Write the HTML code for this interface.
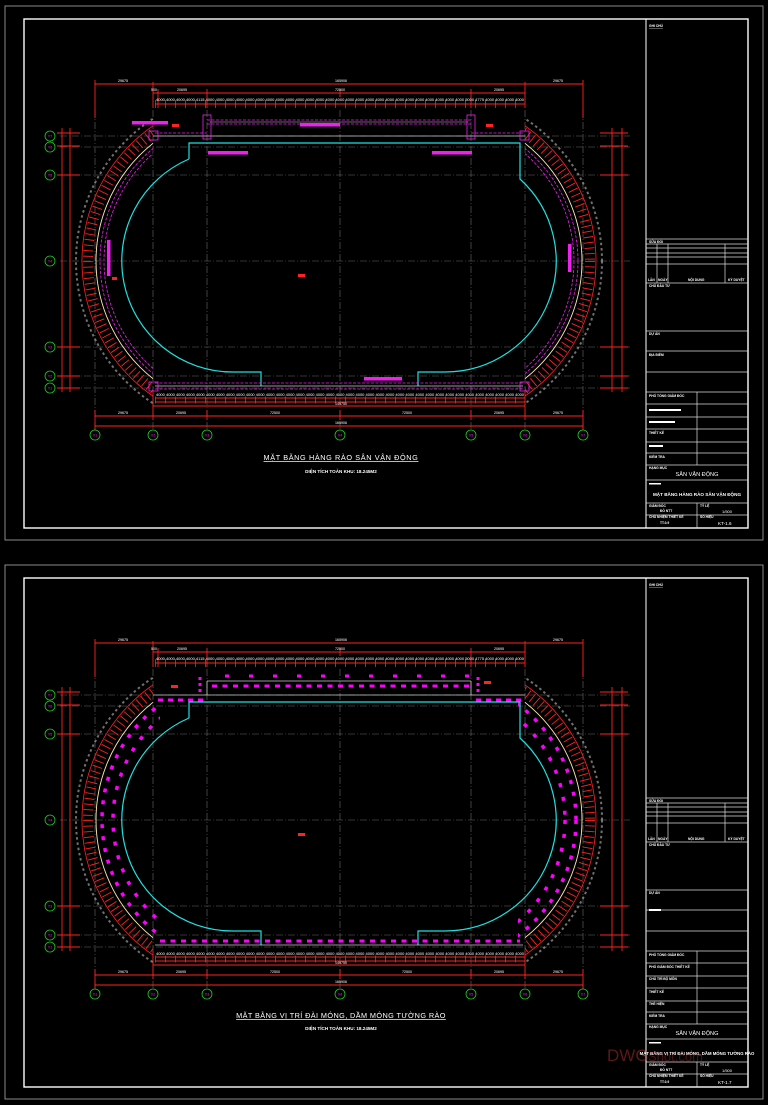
<!DOCTYPE html>
<html><head><meta charset="utf-8"><style>
html,body{margin:0;padding:0;background:#000;}
svg{display:block;}
text{font-family:"Liberation Sans",sans-serif;}
</style></head><body>
<svg width="768" height="1105" viewBox="0 0 768 1105" xmlns="http://www.w3.org/2000/svg">
<rect width="768" height="1105" fill="#000"/>
<defs>
<clipPath id="cl"><rect x="0" y="100" width="153" height="320"/></clipPath>
<clipPath id="cr"><rect x="525" y="100" width="200" height="320"/></clipPath>
<clipPath id="cl2"><rect x="0" y="100" width="160" height="320"/></clipPath>
<clipPath id="cr2"><rect x="518" y="100" width="200" height="320"/></clipPath>
<g id="geo">
 <rect x="5" y="6" width="758" height="534" fill="none" stroke="#8a8a8a" stroke-width="1"/>
 <rect x="24" y="19" width="724" height="509" fill="none" stroke="#fff" stroke-width="1.4"/>
 <line x1="646" y1="19" x2="646" y2="528" stroke="#fff" stroke-width="1"/>
 <g stroke="#ddd" stroke-width="0.7" fill="none">
  <line x1="646" y1="239" x2="748" y2="239"/><line x1="646" y1="244" x2="748" y2="244"/>
  <line x1="646" y1="248" x2="748" y2="248"/><line x1="646" y1="253" x2="748" y2="253"/>
  <line x1="646" y1="257" x2="748" y2="257"/><line x1="646" y1="264" x2="748" y2="264"/>
  <line x1="646" y1="283" x2="748" y2="283"/>
  <line x1="657" y1="244" x2="657" y2="283"/><line x1="668" y1="244" x2="668" y2="283"/><line x1="725" y1="244" x2="725" y2="283"/>
  <line x1="646" y1="331" x2="748" y2="331"/><line x1="646" y1="351" x2="748" y2="351"/>
  <line x1="646" y1="372" x2="748" y2="372"/><line x1="646" y1="392" x2="748" y2="392"/>
  <line x1="646" y1="404" x2="748" y2="404"/><line x1="646" y1="417" x2="748" y2="417"/>
  <line x1="646" y1="429" x2="748" y2="429"/><line x1="646" y1="442" x2="748" y2="442"/>
  <line x1="646" y1="453" x2="748" y2="453"/><line x1="646" y1="465" x2="748" y2="465"/>
  <line x1="646" y1="480" x2="748" y2="480"/><line x1="646" y1="503" x2="748" y2="503"/>
  <line x1="646" y1="515" x2="748" y2="515"/>
  <line x1="697" y1="392" x2="697" y2="465"/><line x1="697" y1="503" x2="697" y2="528"/>
 </g>
 <g stroke="#6a6a6a" stroke-width="0.6" stroke-dasharray="7 2 1 2">
  <line x1="95" y1="110" x2="95" y2="430"/><line x1="153" y1="110" x2="153" y2="430"/>
  <line x1="207" y1="110" x2="207" y2="430"/><line x1="340" y1="110" x2="340" y2="430"/>
  <line x1="471" y1="110" x2="471" y2="430"/><line x1="525" y1="110" x2="525" y2="430"/>
  <line x1="583" y1="110" x2="583" y2="430"/>
  <line x1="60" y1="136" x2="630" y2="136"/><line x1="60" y1="147" x2="630" y2="147"/>
  <line x1="60" y1="175" x2="630" y2="175"/><line x1="60" y1="261" x2="630" y2="261"/>
  <line x1="60" y1="347" x2="630" y2="347"/><line x1="60" y1="376" x2="630" y2="376"/>
  <line x1="60" y1="388" x2="630" y2="388"/>
 </g>
 <g stroke="#f22" stroke-width="0.9" fill="none">
  <line x1="95" y1="84" x2="583" y2="84"/><line x1="153" y1="93" x2="525" y2="93"/>
  <line x1="95" y1="80" x2="95" y2="118"/><line x1="583" y1="80" x2="583" y2="118"/>
  <line x1="153" y1="82" x2="153" y2="108"/><line x1="525" y1="82" x2="525" y2="108"/>
  <line x1="158" y1="89" x2="158" y2="108"/><line x1="207" y1="89" x2="207" y2="108"/>
  <line x1="471" y1="89" x2="471" y2="108"/><line x1="340" y1="89" x2="340" y2="97"/>
  <line x1="155" y1="104" x2="525" y2="104"/>
  <line x1="155" y1="104" x2="525" y2="104" stroke-width="8" stroke-dasharray="0.8 9.2"/>
  <line x1="155" y1="398" x2="525" y2="398"/>
  <line x1="155" y1="402" x2="525" y2="402"/>
  <line x1="153" y1="406" x2="525" y2="406"/>
  <line x1="95" y1="416" x2="583" y2="416"/><line x1="95" y1="426" x2="583" y2="426"/>
  <line x1="95" y1="410" x2="95" y2="430"/><line x1="153" y1="392" x2="153" y2="420"/>
  <line x1="207" y1="410" x2="207" y2="420"/><line x1="340" y1="410" x2="340" y2="420"/>
  <line x1="471" y1="410" x2="471" y2="420"/><line x1="525" y1="392" x2="525" y2="420"/>
  <line x1="583" y1="410" x2="583" y2="430"/>
  <line x1="62" y1="128" x2="62" y2="392"/><line x1="70" y1="128" x2="70" y2="392"/>
  <line x1="57" y1="133" x2="80" y2="133"/><line x1="57" y1="146" x2="80" y2="146"/>
  <line x1="57" y1="175" x2="80" y2="175"/><line x1="57" y1="347" x2="80" y2="347"/>
  <line x1="57" y1="376" x2="80" y2="376"/><line x1="57" y1="388" x2="80" y2="388"/>
  <line x1="612" y1="128" x2="612" y2="392"/><line x1="622" y1="128" x2="622" y2="392"/>
  <line x1="600" y1="133" x2="628" y2="133"/><line x1="600" y1="146" x2="628" y2="146"/>
  <line x1="600" y1="175" x2="628" y2="175"/><line x1="600" y1="347" x2="628" y2="347"/>
  <line x1="600" y1="376" x2="628" y2="376"/><line x1="600" y1="388" x2="628" y2="388"/>
 </g>
 <line x1="155" y1="400" x2="525" y2="400" stroke="#f22" stroke-width="7" stroke-dasharray="0.8 9.2"/>
 <g fill="none" stroke="#2c2" stroke-width="0.8">
  <circle cx="95" cy="435" r="5"/><circle cx="153" cy="435" r="5"/><circle cx="207" cy="435" r="5"/>
  <circle cx="340" cy="435" r="5"/><circle cx="471" cy="435" r="5"/><circle cx="525" cy="435" r="5"/>
  <circle cx="583" cy="435" r="5"/>
  <circle cx="50" cy="136" r="5"/><circle cx="50" cy="147" r="5"/><circle cx="50" cy="175" r="5"/>
  <circle cx="50" cy="261" r="5"/><circle cx="50" cy="347" r="5"/><circle cx="50" cy="376" r="5"/>
  <circle cx="50" cy="388" r="5"/>
 </g>
 <path d="M189,159 V143 H520 V179 A111,111 0 0 1 445,372 H418 V386 M261,386 V372 H233 A111,111 0 0 1 189,159" fill="none" stroke="#1ee0e0" stroke-width="1.2"/>
 <g clip-path="url(#cl)" fill="none">
  <circle cx="246" cy="261" r="158" stroke="#f22" stroke-width="10" stroke-dasharray="0.9 4.6"/>
  <circle cx="246" cy="261" r="164" stroke="#f22" stroke-width="0.8"/>
  <circle cx="246" cy="261" r="170" stroke="#bbb" stroke-width="2" stroke-dasharray="2.5 2.8" opacity="0.6"/>
  <circle cx="246" cy="261" r="150" stroke="#ffe9b0" stroke-width="0.9"/>
 </g>
 <g clip-path="url(#cr)" fill="none">
  <circle cx="432" cy="261" r="158" stroke="#f22" stroke-width="10" stroke-dasharray="0.9 4.6"/>
  <circle cx="432" cy="261" r="164" stroke="#f22" stroke-width="0.8"/>
  <circle cx="432" cy="261" r="170" stroke="#bbb" stroke-width="2" stroke-dasharray="2.5 2.8" opacity="0.6"/>
  <circle cx="432" cy="261" r="150" stroke="#ffe9b0" stroke-width="0.9"/>
 </g>
</g>
</defs>

<!-- ===== SHEET 1 ===== -->
<use href="#geo"/>
<g clip-path="url(#cl)" fill="none">
  <circle cx="246" cy="261" r="146" stroke="#e2e" stroke-width="0.8" stroke-dasharray="3 1.5"/>
  <circle cx="246" cy="261" r="142" stroke="#e2e" stroke-width="0.8" stroke-dasharray="3 1.5"/>
</g>
<g clip-path="url(#cr)" fill="none">
  <circle cx="432" cy="261" r="146" stroke="#e2e" stroke-width="0.8" stroke-dasharray="3 1.5"/>
  <circle cx="432" cy="261" r="142" stroke="#e2e" stroke-width="0.8" stroke-dasharray="3 1.5"/>
</g>
<g fill="none" stroke-width="0.8">
 <line x1="153" y1="136" x2="525" y2="136" stroke="#ccc"/>
 <line x1="155" y1="133" x2="207" y2="133" stroke="#e2e" stroke-dasharray="3 1.5"/>
 <line x1="471" y1="133" x2="523" y2="133" stroke="#e2e" stroke-dasharray="3 1.5"/>
 <line x1="207" y1="120" x2="471" y2="120" stroke="#e2e" stroke-dasharray="3 1.5"/>
 <line x1="207" y1="124" x2="471" y2="124" stroke="#e2e" stroke-dasharray="3 1.5"/>
 <line x1="210" y1="122" x2="468" y2="122" stroke="#ccc" stroke-width="0.5"/>
 <rect x="203" y="115" width="8" height="24" stroke="#e2e"/>
 <rect x="467" y="115" width="8" height="24" stroke="#e2e"/>
 <rect x="149" y="131" width="9" height="9" stroke="#e2e"/>
 <rect x="520" y="131" width="9" height="9" stroke="#e2e"/>
 <line x1="155" y1="383" x2="523" y2="383" stroke="#e2e" stroke-dasharray="3 1.5"/>
 <line x1="155" y1="389" x2="523" y2="389" stroke="#e2e" stroke-dasharray="3 1.5"/>
 <line x1="155" y1="386" x2="523" y2="386" stroke="#ccc"/>
 <rect x="149" y="382" width="9" height="9" stroke="#e2e"/>
 <rect x="520" y="382" width="9" height="9" stroke="#e2e"/>
</g>
<g fill="#e2e">
 <rect x="132" y="121" width="36" height="3.5"/><rect x="208" y="151" width="40" height="3.5"/>
 <rect x="432" y="151" width="40" height="3.5"/><rect x="300" y="123" width="40" height="3.5"/>
 <rect x="364" y="377" width="38" height="3.5"/><rect x="107" y="240" width="3.5" height="36"/>
 <rect x="568" y="244" width="3.5" height="28"/>
</g>
<g fill="#f22"><rect x="298" y="274" width="7" height="3"/><rect x="172" y="124" width="7" height="3"/><rect x="486" y="124" width="7" height="3"/><rect x="112" y="277" width="5" height="3"/></g>
<g fill="#fff" font-size="3.6">
 <text x="156" y="101" textLength="368" lengthAdjust="spacingAndGlyphs">4000 4000 4000 4000 4115 4000 4000 4000 4000 4000 4000 4000 4000 4000 4000 4000 4000 4000 4000 4000 4000 4000 4000 4000 4000 4000 4000 4000 4000 4000 4000 5000 4775 4000 4000 4000 4000</text>
 <text x="156" y="396" textLength="368" lengthAdjust="spacingAndGlyphs">4000 4000 4000 4000 4000 4000 4000 4000 4000 4000 4000 4000 4000 4000 4000 4000 4000 4000 4000 4000 4000 4000 4000 4000 4000 4000 4000 4000 4000 4000 4000 4000 4000 4000 4000 4000 4000</text>
 <text x="118" y="82">29675</text><text x="335" y="82">165906</text><text x="553" y="82">29675</text>
 <text x="151" y="91">500</text><text x="177" y="91">20695</text><text x="335" y="91">72500</text><text x="494" y="91">20695</text>
 <text x="335" y="405">149750</text><text x="118" y="414">29675</text><text x="176" y="414">20695</text>
 <text x="270" y="414">72500</text><text x="402" y="414">72500</text><text x="494" y="414">20695</text><text x="553" y="414">29675</text>
 <text x="335" y="424">165906</text>
</g>
<g fill="#e2e" font-size="3.5" text-anchor="middle">
 <text x="95" y="436.5">X1</text><text x="153" y="436.5">X2</text><text x="207" y="436.5">X3</text><text x="340" y="436.5">X4</text><text x="471" y="436.5">X5</text><text x="525" y="436.5">X6</text><text x="583" y="436.5">X7</text>
 <text x="50" y="137.5">Y7</text><text x="50" y="148.5">Y6</text><text x="50" y="176.5">Y5</text><text x="50" y="262.5">Y4</text><text x="50" y="348.5">Y3</text><text x="50" y="377.5">Y2</text><text x="50" y="389.5">Y1</text>
</g>
<text x="341" y="460" fill="#fff" font-size="7.3" text-anchor="middle" letter-spacing="0.6" text-decoration="underline">MẶT BẰNG HÀNG RÀO SÂN VẬN ĐỘNG</text>
<text x="341" y="473" fill="#fff" font-size="4.6" text-anchor="middle" font-weight="bold">DIỆN TÍCH TOÀN KHU: 18.245M2</text>
<g fill="#fff" font-size="3.3" font-weight="bold">
 <text x="649" y="27" text-decoration="underline">GHI CHÚ</text>
 <text x="649" y="243">SỬA ĐỔI</text>
 <text x="648" y="281">LẦN</text><text x="658" y="281">NGÀY</text><text x="688" y="281">NỘI DUNG</text><text x="728" y="281">KÝ DUYỆT</text>
 <text x="649" y="287">CHỦ ĐẦU TƯ</text>
 <text x="649" y="335">DỰ ÁN</text><text x="649" y="356">ĐỊA ĐIỂM</text>
 <text x="649" y="397">PHÓ TỔNG GIÁM ĐỐC</text>
 <text x="649" y="434">THIẾT KẾ</text><text x="649" y="458">KIỂM TRA</text>
 <text x="649" y="469">HẠNG MỤC</text>
 <text x="649" y="507">GIÁM ĐỐC</text><text x="700" y="507">TỶ LỆ</text>
 <text x="649" y="518">CHỦ NHIỆM THIẾT KẾ</text><text x="700" y="518">SỐ HIỆU</text>
 <text x="660" y="512">ĐỖ NTT</text><text x="660" y="524">TT.0.9</text>
</g>
<g fill="#fff"><rect x="649" y="409" width="32" height="2"/><rect x="649" y="421" width="26" height="2"/><rect x="649" y="445" width="14" height="2"/><rect x="649" y="483" width="12" height="1.5"/></g>
<text x="697" y="476" fill="#fff" font-size="5.6" text-anchor="middle">SÂN VẬN ĐỘNG</text>
<text x="697" y="496" fill="#fff" font-size="4.6" font-weight="bold" text-anchor="middle">MẶT BẰNG HÀNG RÀO SÂN VẬN ĐỘNG</text>
<text x="722" y="513" fill="#fff" font-size="4">1/500</text>
<text x="718" y="525" fill="#fff" font-size="4.6">KT-1.6</text>

<!-- ===== SHEET 2 ===== -->
<g transform="translate(0,559)">
<use href="#geo"/>
<g clip-path="url(#cl2)" fill="none">
  <circle cx="246" cy="261" r="144" stroke="#f0f" stroke-width="3.5" stroke-dasharray="4 8"/>
  <circle cx="246" cy="261" r="133" stroke="#f0f" stroke-width="3.5" stroke-dasharray="4 10"/>
</g>
<g clip-path="url(#cr2)" fill="none">
  <circle cx="432" cy="261" r="144" stroke="#f0f" stroke-width="3.5" stroke-dasharray="4 8"/>
  <circle cx="432" cy="261" r="133" stroke="#f0f" stroke-width="3.5" stroke-dasharray="4 10"/>
</g>
<g fill="none" stroke-width="0.8">
 <line x1="153" y1="136" x2="525" y2="136" stroke="#ccc"/>
 <line x1="207" y1="122" x2="471" y2="122" stroke="#ccc"/>
 <line x1="207" y1="122" x2="207" y2="136" stroke="#ccc"/>
 <line x1="471" y1="122" x2="471" y2="136" stroke="#ccc"/>
 <line x1="155" y1="386" x2="523" y2="386" stroke="#ccc"/>
</g>
<g stroke="#f0f" stroke-width="3" fill="none">
 <line x1="212" y1="127" x2="470" y2="127" stroke-dasharray="5 5.5"/>
 <line x1="158" y1="141" x2="205" y2="141" stroke-dasharray="5 5"/>
 <line x1="476" y1="141" x2="522" y2="141" stroke-dasharray="5 5"/>
 <line x1="160" y1="382" x2="520" y2="382" stroke-dasharray="5 5.5"/>
 <line x1="225" y1="117" x2="470" y2="117" stroke-dasharray="4 20"/>
 <line x1="200" y1="118" x2="200" y2="136" stroke-dasharray="3 3"/>
 <line x1="478" y1="118" x2="478" y2="136" stroke-dasharray="3 3"/>
</g>
<g fill="#f22"><rect x="298" y="274" width="7" height="3"/><rect x="171" y="126" width="7" height="3"/><rect x="484" y="122" width="7" height="3"/></g>
<g fill="#fff" font-size="3.6">
 <text x="156" y="101" textLength="368" lengthAdjust="spacingAndGlyphs">4000 4000 4000 4000 4115 4000 4000 4000 4000 4000 4000 4000 4000 4000 4000 4000 4000 4000 4000 4000 4000 4000 4000 4000 4000 4000 4000 4000 4000 4000 4000 5000 4775 4000 4000 4000 4000</text>
 <text x="156" y="396" textLength="368" lengthAdjust="spacingAndGlyphs">4000 4000 4000 4000 4000 4000 4000 4000 4000 4000 4000 4000 4000 4000 4000 4000 4000 4000 4000 4000 4000 4000 4000 4000 4000 4000 4000 4000 4000 4000 4000 4000 4000 4000 4000 4000 4000</text>
 <text x="118" y="82">29675</text><text x="335" y="82">165906</text><text x="553" y="82">29675</text>
 <text x="151" y="91">500</text><text x="177" y="91">20695</text><text x="335" y="91">72500</text><text x="494" y="91">20695</text>
 <text x="335" y="405">149750</text><text x="118" y="414">29675</text><text x="176" y="414">20695</text>
 <text x="270" y="414">72500</text><text x="402" y="414">72500</text><text x="494" y="414">20695</text><text x="553" y="414">29675</text>
 <text x="335" y="424">165906</text>
</g>
<g fill="#e2e" font-size="3.5" text-anchor="middle">
 <text x="95" y="436.5">X1</text><text x="153" y="436.5">X2</text><text x="207" y="436.5">X3</text><text x="340" y="436.5">X4</text><text x="471" y="436.5">X5</text><text x="525" y="436.5">X6</text><text x="583" y="436.5">X7</text>
 <text x="50" y="137.5">Y7</text><text x="50" y="148.5">Y6</text><text x="50" y="176.5">Y5</text><text x="50" y="262.5">Y4</text><text x="50" y="348.5">Y3</text><text x="50" y="377.5">Y2</text><text x="50" y="389.5">Y1</text>
</g>
<text x="341" y="459" fill="#fff" font-size="7.3" text-anchor="middle" letter-spacing="0.4" text-decoration="underline">MẶT BẰNG VỊ TRÍ ĐÀI MÓNG, DẦM MÓNG TƯỜNG RÀO</text>
<text x="341" y="471" fill="#fff" font-size="4.6" text-anchor="middle" font-weight="bold">DIỆN TÍCH TOÀN KHU: 18.245M2</text>
<g fill="#fff" font-size="3.3" font-weight="bold">
 <text x="649" y="27" text-decoration="underline">GHI CHÚ</text>
 <text x="649" y="243">SỬA ĐỔI</text>
 <text x="648" y="281">LẦN</text><text x="658" y="281">NGÀY</text><text x="688" y="281">NỘI DUNG</text><text x="728" y="281">KÝ DUYỆT</text>
 <text x="649" y="287">CHỦ ĐẦU TƯ</text>
 <text x="649" y="335">DỰ ÁN</text>
 <text x="649" y="397">PHÓ TỔNG GIÁM ĐỐC</text>
 <text x="649" y="409">PHÓ GIÁM ĐỐC THIẾT KẾ</text><text x="649" y="421">CHỦ TRÌ BỘ MÔN</text>
 <text x="649" y="434">THIẾT KẾ</text><text x="649" y="446">THỂ HIỆN</text><text x="649" y="458">KIỂM TRA</text>
 <text x="649" y="469">HẠNG MỤC</text>
 <text x="649" y="507">GIÁM ĐỐC</text><text x="700" y="507">TỶ LỆ</text>
 <text x="649" y="518">CHỦ NHIỆM THIẾT KẾ</text><text x="700" y="518">SỐ HIỆU</text>
 <text x="660" y="512">ĐỖ NTT</text><text x="660" y="524">TT.0.9</text>
</g>
<g fill="#fff"><rect x="649" y="350" width="12" height="2"/><rect x="649" y="483" width="12" height="1.5"/></g>
<text x="697" y="476" fill="#fff" font-size="5.6" text-anchor="middle">SÂN VẬN ĐỘNG</text>
<text x="697" y="496" fill="#fff" font-size="4.3" font-weight="bold" text-anchor="middle">MẶT BẰNG VỊ TRÍ ĐÀI MÓNG, DẦM MÓNG TƯỜNG RÀO</text>
<text x="722" y="513" fill="#fff" font-size="4">1/500</text>
<text x="718" y="525" fill="#fff" font-size="4.6">KT-1.7</text>
<text x="607" y="502" fill="#c33" opacity="0.45" font-size="17">DWG</text>
<text x="648" y="502" fill="#c33" opacity="0.35" font-size="13">Shot.com</text>
</g>
</svg>
</body></html>
